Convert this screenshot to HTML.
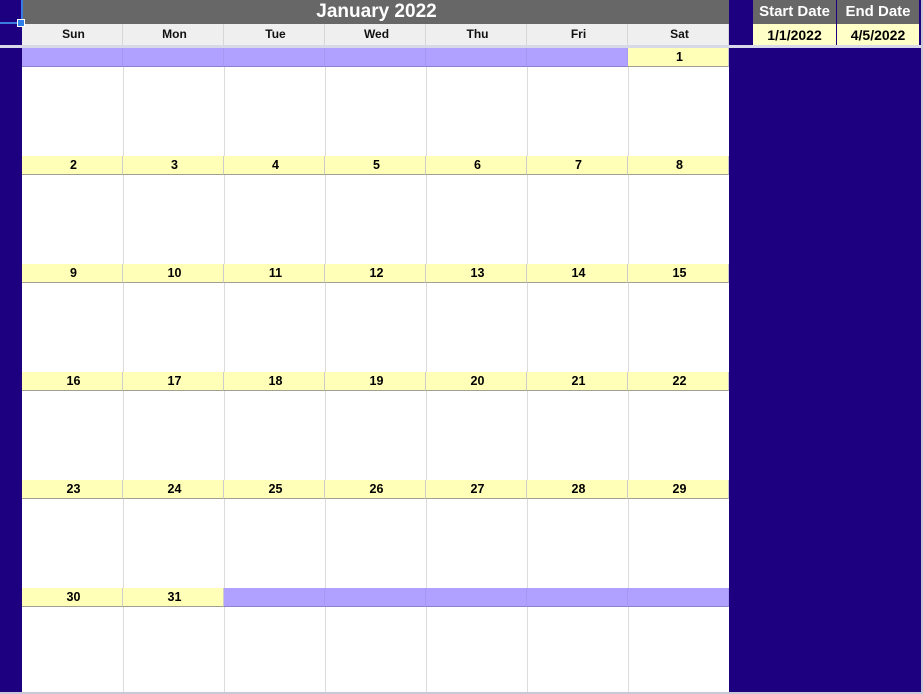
<!DOCTYPE html>
<html><head><style>
*{margin:0;padding:0;box-sizing:border-box}
body{width:923px;height:694px;background:#1c0080;position:relative;overflow:hidden;font-family:"Liberation Sans",Arial,sans-serif}
.a{position:absolute}
.title{left:22px;top:0;width:707px;height:24px;background:#676767;color:#fff;font-weight:bold;font-size:19px;text-align:center;line-height:24px;padding-left:2px}
.dh{left:22px;top:24px;width:707px;height:21px;display:flex;background:#efefef}
.dh div{width:101px;border-right:1px solid #d6d6d6;text-align:center;font-weight:bold;font-size:12px;line-height:21px;color:#111;padding-left:3px}
.sep{left:0;top:45px;width:923px;height:3px;background:#d8d8e8}
.cal{left:22px;top:48px;width:707px;height:644px;background:#fff}
.col{position:absolute;top:0;bottom:0;width:1px;background:#dcdcdc}
.wk{position:absolute;left:0;width:707px;height:19px;display:flex}
.wk div{width:101px;height:19px;border-right:1px solid #ccc;border-bottom:1px solid #a0a090;background:#ffffb8;text-align:center;font-weight:bold;font-size:12.5px;line-height:19px;color:#000;padding-left:3px}
.wk div.p{background:#b0a0ff;border-bottom:1px solid #8c80d0;border-right:1px solid #a598f0}
.rh{top:0;height:24px;background:#676767;color:#fff;font-weight:bold;font-size:15px;line-height:24px;text-align:center}
.rv{top:24px;height:21px;background:#ffffc8;color:#000;font-weight:bold;font-size:14px;line-height:22px;text-align:center}
</style></head><body>
<div class="a title">January 2022</div>
<div class="a dh"><div>Sun</div><div>Mon</div><div>Tue</div><div>Wed</div><div>Thu</div><div>Fri</div><div>Sat</div></div>
<div class="a rh" style="left:753px;width:83px">Start Date</div>
<div class="a rh" style="left:837px;width:82px">End Date</div>
<div class="a rv" style="left:753px;width:83px">1/1/2022</div>
<div class="a rv" style="left:837px;width:82px">4/5/2022</div>
<div class="a sep"></div>
<div class="a cal">
<div class="col" style="left:101px"></div><div class="col" style="left:202px"></div><div class="col" style="left:303px"></div><div class="col" style="left:404px"></div><div class="col" style="left:505px"></div><div class="col" style="left:606px"></div>
<div class="wk" style="top:0"><div class="p"></div><div class="p"></div><div class="p"></div><div class="p"></div><div class="p"></div><div class="p"></div><div>1</div></div>
<div class="wk" style="top:108px"><div>2</div><div>3</div><div>4</div><div>5</div><div>6</div><div>7</div><div>8</div></div>
<div class="wk" style="top:216px"><div>9</div><div>10</div><div>11</div><div>12</div><div>13</div><div>14</div><div>15</div></div>
<div class="wk" style="top:324px"><div>16</div><div>17</div><div>18</div><div>19</div><div>20</div><div>21</div><div>22</div></div>
<div class="wk" style="top:432px"><div>23</div><div>24</div><div>25</div><div>26</div><div>27</div><div>28</div><div>29</div></div>
<div class="wk" style="top:540px"><div>30</div><div>31</div><div class="p"></div><div class="p"></div><div class="p"></div><div class="p"></div><div class="p"></div></div>
</div>
<div class="a" style="left:0;top:22px;width:22px;height:2px;background:#3a7ce0"></div>
<div class="a" style="left:21px;top:0;width:2px;height:24px;background:#3a7ce0"></div>
<div class="a" style="left:17px;top:19px;width:8px;height:8px;background:#2f7fe8;border:1px solid #fff"></div>
<div class="a" style="left:0;top:692px;width:923px;height:2px;background:#c8c8d8"></div>
<div class="a" style="left:921px;top:0;width:2px;height:694px;background:#c8c8d8"></div>
</body></html>
